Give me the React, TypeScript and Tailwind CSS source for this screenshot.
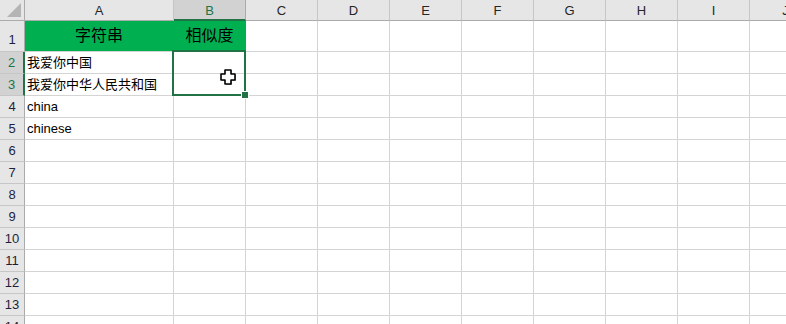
import React from "react";

const COLS = ["A", "B", "C", "D", "E", "F", "G", "H", "I", "J"];
const colW = (c: string) => (c === "A" ? "w-[149px]" : "w-[72px]");

const data: Record<number, { A?: string }> = {
  2: { A: "我爱你中国" },
  3: { A: "我爱你中华人民共和国" },
  4: { A: "china" },
  5: { A: "chinese" },
};

const font = { fontFamily: '"Liberation Sans", "Noto Sans CJK SC", sans-serif' };

function HeaderRow() {
  return (
    <div className="flex h-[21px] shrink-0">
      <div className="w-[25px] h-[21px] shrink-0 bg-[#e6e6e6] border-r border-b border-[#ababab] relative">
        <svg className="absolute left-[7px] top-[3px]" width="14" height="14" viewBox="0 0 14 14">
          <polygon points="14,0 14,14 0,14" fill="#b4b4b4" />
        </svg>
      </div>
      {COLS.map((c) => {
        const sel = c === "B";
        return (
          <div
            key={c}
            className={`${colW(c)} h-[21px] shrink-0 flex items-center justify-center text-[13px] border-r ${
              sel
                ? "bg-[#d2d2d2] text-[#217346] border-r-[#ababab] border-b-2 border-b-[#217346]"
                : "bg-[#e6e6e6] text-[#262626] border-r-[#c6c6c6] border-b border-b-[#ababab]"
            }`}
          >
            <span className="leading-none pt-[1px]">{c}</span>
          </div>
        );
      })}
    </div>
  );
}

function Row({ n }: { n: number }) {
  const h = n === 1 ? "h-[31px]" : "h-[22px]";
  const sel = n === 2 || n === 3;
  return (
    <div className={`flex ${h} shrink-0`}>
      <div
        className={`w-[25px] ${h} shrink-0 flex items-center justify-center text-[13px] border-b border-b-[#c6c6c6] ${
          sel
            ? "bg-[#d2d2d2] text-[#217346] border-r-2 border-r-[#217346]"
            : "bg-[#e6e6e6] text-[#1f1f3a] border-r border-r-[#ababab]"
        } ${n === 1 ? "items-end pb-[5px]" : ""}`}
      >
        <span className="leading-none">{n}</span>
      </div>
      {COLS.map((c) => {
        if (n === 1 && (c === "A" || c === "B")) {
          return (
            <div
              key={c}
              className={`${colW(c)} ${h} shrink-0 bg-[#00b050] border-r border-r-[#00b050] border-b border-b-[#d4d4d4] flex items-center justify-center text-[16px] text-black`}
            >
              <span className="leading-none">{c === "A" ? "字符串" : "相似度"}</span>
            </div>
          );
        }
        const txt = c === "A" ? data[n]?.A : undefined;
        return (
          <div
            key={c}
            className={`${colW(c)} ${h} shrink-0 bg-white border-r border-b border-[#d4d4d4] flex items-center pl-[2px] text-[13px] text-black whitespace-nowrap`}
          >
            {txt && <span className="leading-none">{txt}</span>}
          </div>
        );
      })}
    </div>
  );
}

export default function App() {
  const rows = Array.from({ length: 14 }, (_, i) => i + 1);
  return (
    <div className="relative w-[786px] h-[324px] overflow-hidden bg-white" style={font}>
      <div className="flex flex-col w-[900px]">
        <HeaderRow />
        {rows.map((n) => (
          <Row key={n} n={n} />
        ))}
      </div>
      <div className="absolute left-[172px] top-[50px] w-[74px] h-[46px] border-2 border-[#217346]" />
      <div className="absolute left-[242px] top-[92px] w-[6px] h-[6px] bg-[#217346] outline outline-1 outline-white" />
      <svg className="absolute left-[220px] top-[69px]" width="18" height="18" viewBox="0 0 18 18">
        <path
          d="M5 1 H11 V5 H15 V11 H11 V15 H5 V11 H1 V5 H5 Z"
          fill="#000"
          opacity="0.3"
          transform="translate(1 1)"
        />
        <path
          d="M5 1 H11 V5 H15 V11 H11 V15 H5 V11 H1 V5 H5 Z"
          fill="#fff"
          stroke="#000"
          strokeWidth="1.6"
          strokeLinejoin="round"
        />
      </svg>
    </div>
  );
}
